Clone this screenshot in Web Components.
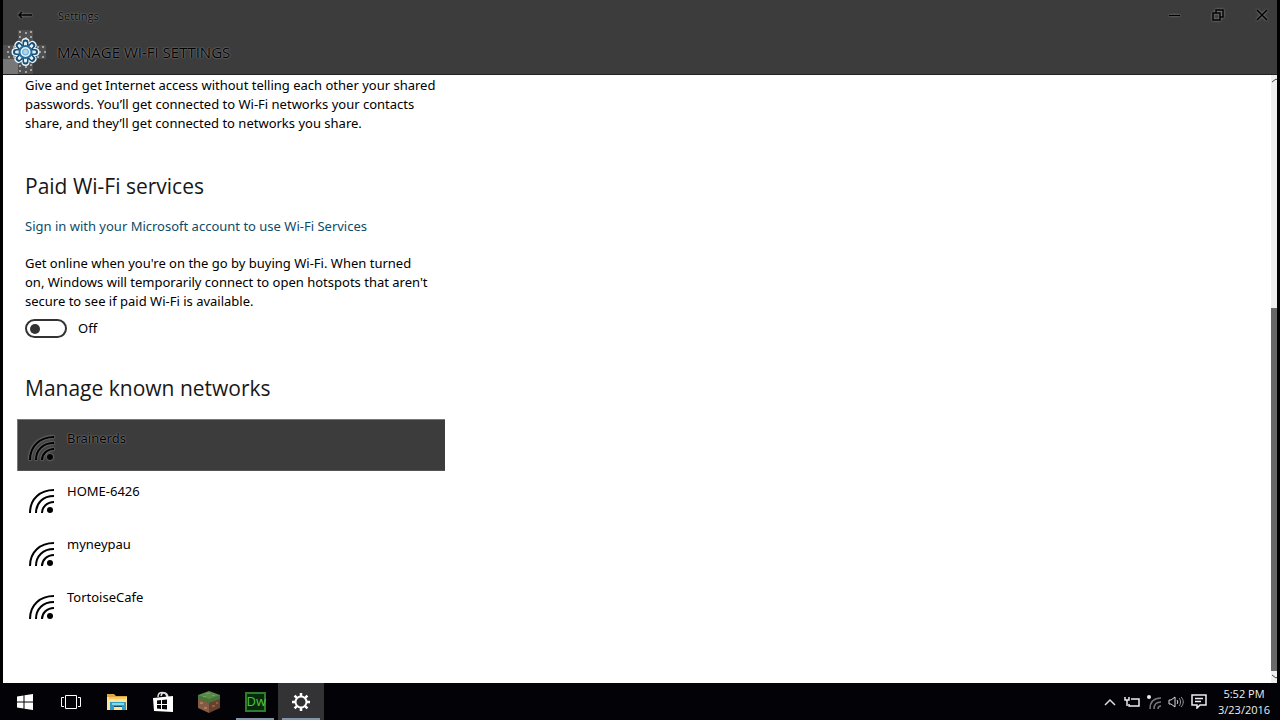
<!DOCTYPE html>
<html lang="en">
<head>
<meta charset="utf-8">
<meta name="viewport" content="width=device-width, initial-scale=1">
<title>Settings</title>
<style>
html, body { height: 100%; margin: 0; background: #000; }
body { font: 13px/19px "Noto Sans", "Open Sans", sans-serif; color: #000; }
</style>
</head>
<body>
<settings-desktop>
  <settings-header slot="header" heading="MANAGE WI-FI SETTINGS">Settings</settings-header>
  <settings-section>
    <p>Give and get Internet access without telling each other your shared<br>passwords. You’ll get connected to Wi-Fi networks your contacts<br>share, and they’ll get connected to networks you share.</p>
  </settings-section>
  <settings-section heading="Paid Wi-Fi services">
    <settings-link href="#sign-in">Sign in with your Microsoft account to use Wi-Fi Services</settings-link>
    <p>Get online when you're on the go by buying Wi-Fi. When turned<br>on, Windows will temporarily connect to open hotspots that aren't<br>secure to see if paid Wi-Fi is available.</p>
    <toggle-switch>Off</toggle-switch>
  </settings-section>
  <settings-section heading="Manage known networks">
    <network-list>
      <network-item selected>Brainerds</network-item>
      <network-item>HOME-6426</network-item>
      <network-item>myneypau</network-item>
      <network-item>TortoiseCafe</network-item>
    </network-list>
  </settings-section>
  <task-bar slot="taskbar"></task-bar>
</settings-desktop>

<script>
const define = (name, html, setup) => {
  const template = document.createElement('template');
  template.innerHTML = html;
  customElements.define(name, class extends HTMLElement {
    constructor() {
      super();
      this.attachShadow({ mode: 'open' }).append(template.content.cloneNode(true));
    }
    connectedCallback() { if (setup) setup(this, this.shadowRoot); }
  });
};

define('settings-desktop', `
<style>
:host { display: grid; grid-template-rows: auto minmax(0, 1fr) auto; height: 100vh; }
.header, .view { margin: 0 3px; }
.view { display: flex; background: #fff; overflow: hidden; }
main { flex: 1; min-width: 0; overflow: hidden; padding: 1px 22px 0; }
</style>
<div class="header"><slot name="header"></slot></div>
<div class="view"><main><slot></slot></main><scroll-strip></scroll-strip></div>
<slot name="taskbar"></slot>`);

define('settings-header', `
<style>
:host { display: block; background: #3c3c3c; color: #000; border-bottom: 1px solid #222; font-family: "Open Sans", sans-serif;
  text-shadow: 0 0 1px #888, 0 0 2px #888; }
.bar { display: flex; align-items: center; height: 30px; padding-left: 12px; }
button { display: grid; place-items: center; width: 30px; height: 30px; padding: 0; border: 0; background: none; color: inherit; }
svg { display: block; filter: drop-shadow(0 0 1px #999); }
.back { width: 20px; }
.title { flex: 1; margin-left: 23px; font-size: 11px; }
.controls { display: flex; gap: 14px; }
.page { display: flex; align-items: center; gap: 7px; height: 44px; }
.page svg { filter: none; }
h1 { margin: 0; font-size: 15px; line-height: 20px; font-weight: 400; }
</style>
<div class="bar">
  <button class="back" aria-label="Back"><svg width="14" height="10" fill="none" stroke="currentColor" stroke-width="1.500"><path d="M14 5H1M4 2 1 5l3 3"/></svg></button>
  <span class="title"><slot></slot></span>
  <div class="controls">
    <button aria-label="Minimize"><svg width="12" height="12" stroke="currentColor"><path d="M1 6.500h11"/></svg></button>
    <button aria-label="Restore"><svg width="12" height="12" fill="none" stroke="currentColor" stroke-width="1.500"><path d="M1 4h7v7H1zM4 4V1h7v7H8"/></svg></button>
    <button aria-label="Close"><svg width="12" height="12" stroke="currentColor" stroke-width="1.500"><path d="m1 1 10 10M11 1 1 11"/></svg></button>
  </div>
</div>
<div class="page">
  <svg width="47" height="44" viewBox="0 0 47 44" fill="none" aria-hidden="true">
    <path fill="#777" d="M0 29h15v15H0z"/>
    <path fill="#505050" d="M15 0h15v44H15zM0 15h43v14H0z"/>
    <path stroke="#a2a2a2" stroke-dasharray="2 3" stroke-width="2" d="M17 1v10M23 2v7M28 1v10M17 35v9M23 36v8M28 34v10M5 17h7M4 22h5M5 27h7M34 17h8M36 22h7M34 27h7"/>
    <g stroke="#e9f5fc" stroke-width="8" stroke-linecap="round"><path d="M22.500 12v20M12.500 22h20M15.500 15l14 14M29.500 15l-14 14"/></g>
    <g stroke="#164e75" stroke-width="6" stroke-linecap="round"><path d="M22.500 12.500v19M13 22h19M15.800 15.300l13.400 13.400M29.200 15.300l-13.400 13.400"/></g>
    <g stroke="#e2f2fb" stroke-width="3" stroke-linecap="round"><path d="M22.500 13v18M13.500 22h18M16.200 15.700l12.600 12.600M28.800 15.700l-12.600 12.600"/></g>
    <circle cx="22.500" cy="22" r="6" fill="#e2f2fb" stroke="#286b96" stroke-width="2"/>
    <circle cx="22.500" cy="22" r="3" fill="#a8d7f2" stroke="#63a5ce"/>
  </svg>
  <h1></h1>
</div>`, (host, root) => { root.querySelector('h1').textContent = host.getAttribute('heading'); });

define('settings-section', `
<style>
:host { display: block; margin-bottom: 36px; }
h2 { margin: 0 0 17px; font: 400 21px/28px "Open Sans", sans-serif; color: #181818; }
h2:empty { display: none; }
::slotted(p) { margin: 0; padding-bottom: 3px; }
</style>
<h2></h2><slot></slot>`, (host, root) => { root.querySelector('h2').textContent = host.getAttribute('heading') || ''; });

define('settings-link', `
<style>
:host { display: block; margin-bottom: 18px; }
a { color: #0f4b66; text-decoration: none; }
</style>
<a><slot></slot></a>`, (host, root) => { root.querySelector('a').href = host.getAttribute('href'); });

define('toggle-switch', `
<style>
:host { display: block; padding-top: 5px; }
label { display: flex; align-items: center; gap: 11px; width: max-content; }
input { appearance: none; display: flex; align-items: center; box-sizing: border-box; width: 42px; height: 19px; margin: 0; padding: 0 3px; border: 2px solid #333; border-radius: 10px; }
input::before { content: ""; width: 10px; height: 10px; border-radius: 50%; background: #333; }
input:checked { justify-content: flex-end; }
</style>
<label><input type="checkbox" role="switch"><span><slot></slot></span></label>`);

define('network-list', `
<style>
:host { display: block; max-width: 428px; margin: 0 -8px; }
</style>
<div role="list"><slot></slot></div>`);

define('network-item', `
<style>
:host { display: block; margin-bottom: 1px; }
button { display: flex; gap: 12px; box-sizing: border-box; width: 100%; height: 52px; padding: 10px 12px; border: 0; background: none; color: #000; font: inherit; text-align: left; }
svg { margin-top: 6px; }
:host([selected]) button { background: #3c3c3c; box-shadow: inset 0 1px #777, inset 1px 0 #777, inset 0 -1px #555; text-shadow: 0 0 1px #888, 0 0 2px #888; }
:host([selected]) svg { filter: drop-shadow(0 0 1px #aaa); }
</style>
<button><svg width="26" height="26" fill="none" stroke="currentColor" stroke-width="2" aria-hidden="true">
<path d="M1 25C1 11 11 2 25 2M7 25C7 15 14 8 25 8M13 25c0-6 5-11 12-11"/><circle cx="21" cy="22" r="3" fill="currentColor" stroke="none"/></svg><span><slot></slot></span></button>`);

define('scroll-strip', `
<style>
:host { display: flex; flex-direction: column; width: 6px; background: #eee; }
svg { display: block; flex: none; }
.before { flex: 221; }
.thumb { flex: 363; background: #686868; }
</style>
<svg width="6" height="12" stroke="#444" fill="none"><path d="m1 7 4-3 4 3"/></svg>
<div class="before"></div><div class="thumb"></div>
<svg width="6" height="12" stroke="#444" fill="none"><path d="m1 4 4 3 4-3"/></svg>`);

define('task-bar', `
<style>
:host { display: flex; justify-content: space-between; height: 37px; padding: 0 10px 0 2px; background: #020207; color: #eee; }
nav, .tray { display: flex; align-items: stretch; }
button { display: grid; place-items: center; width: 46px; padding: 0; border: 0; background: none; color: #fff; }
.running { background: linear-gradient(#8494a8, #8494a8) center bottom / 38px 2px no-repeat; }
.active { background-color: #333336; }
.tray button { width: 22px; }
.tray .notes { width: 24px; }
svg { display: block; }
.dw { box-sizing: border-box; width: 21px; height: 20px; border: 2px solid #2f7d2a; background: #062b0b; color: #52c33e; font: 13px/15px "Open Sans", sans-serif; text-align: center; }
time { display: flex; flex-direction: column; justify-content: center; margin-left: 7px; width: 52px; font: 11px/16px "Open Sans", sans-serif; text-align: center; white-space: nowrap; }
</style>
<nav aria-label="Taskbar">
  <button aria-label="Start"><svg width="16" height="16" fill="#fff"><path d="M0 2.500 6.500 1.500V7.500H0zM7.500 1.300 16 0v7.500H7.500zM0 8.500h6.500v6L0 13.600zM7.500 8.500H16V16l-8.500-1.300z"/></svg></button>
  <button aria-label="Task view"><svg width="20" height="14" fill="none" stroke="#fff"><path d="M4.500.5h11v13h-11zM3 2.500H.5v9H3M17 2.500h2.500v9H17"/></svg></button>
  <button aria-label="File Explorer"><svg width="20" height="18"><path fill="#dda743" d="M0 1h7l2 2h11v14H0z"/><path fill="#ffe397" d="M0 4h20v13H0z"/><path fill="#f3c965" d="M2 4h17v2H2z"/><path fill="#2c9dc6" d="M3 9h16v8h-4v-4H7v4H3z"/><path fill="#8bd5e9" d="M5 10h12v2H5z"/><path fill="#174b63" d="M7 13h8v1H7z"/></svg></button>
  <button aria-label="Store"><svg width="20" height="22" fill="none"><path stroke="#ddd" stroke-width="1.500" d="M5 6c0-6 8-6 9 0M8 5c1-5 6-4 7 1"/><path fill="#fff" d="m0 7 20-2v16L1 20z"/><path fill="#050509" d="M4 9.500 8 9v4H4zM9 9l5-.5V13H9zM4 14h4v4l-4-.4zM9 14h5v4.500L9 18z"/></svg></button>
  <button aria-label="Minecraft"><svg width="22" height="22"><path fill="#5b8a48" d="M11 0 22 4v4l-11 4L0 8V4z"/><path fill="#477539" d="m0 4 11 4v4L0 9zM22 4 11 8v4l11-3z"/><path fill="#855b43" d="m0 8 11 4v10L0 17z"/><path fill="#68402f" d="m22 8-11 4v10l11-5z"/><path fill="#aa7b5e" d="M2 11h3v2H2zM6 16h3v2H6z"/><path fill="#915f48" d="M14 14h3v2h-3zM18 11h2v2h-2z"/><path fill="#76a15c" d="M8 2h4v1H8zM14 4h3v1h-3zM5 5h3v1H5z"/></svg></button>
  <button class="running" aria-label="Dreamweaver"><span class="dw">Dw</span></button>
  <button class="running active" aria-label="Settings"><svg width="18" height="18" fill="none" stroke="#fff"><circle cx="9" cy="9" r="5.500" stroke-width="2"/><path stroke-width="2.500" d="M9 0v3M9 15v3M0 9h3M15 9h3M2.600 2.600l2.200 2.200M13.200 13.200l2.200 2.200M2.600 15.400l2.200-2.200M13.200 4.800l2.200-2.200"/></svg></button>
</nav>
<div class="tray">
  <button aria-label="Show hidden icons"><svg width="12" height="8" fill="none" stroke="#ddd" stroke-width="1.500"><path d="m1 7 5-5 5 5"/></svg></button>
  <button aria-label="Battery"><svg width="16" height="12" fill="none" stroke="#eee" stroke-width="1.500"><path d="M7 3h8v7H5V8M1 1v3h4V1M3 4v6"/></svg></button>
  <button aria-label="Network"><svg width="16" height="16" fill="none" stroke="#777" stroke-width="1.500"><path d="M4 15C4 8 8 4 15 4M8 15c0-5 2-7 7-7M12 15c0-2 1-3 3-3"/><circle cx="3" cy="3" r="2" fill="#eee" stroke="none"/></svg></button>
  <button aria-label="Volume"><svg width="16" height="12" fill="none" stroke="#ddd"><path d="M1 4h2l4-3v10L3 8H1zM9 4c1 1 1 3 0 4"/><path stroke="#999" d="M11 2c2 2 2 6 0 8M13 1c3 3 3 7 0 10"/></svg></button>
  <button class="notes" aria-label="Notifications"><svg width="16" height="15" fill="none" stroke="#eee" stroke-width="1.500"><path d="M1 1h14v10H9l-3 3v-3H1zM4 4.500h8M4 7.500h6"/></svg></button>
  <time datetime="2016-03-23T17:52"><span>5:52 PM</span><span>3/23/2016</span></time>
</div>`);
</script>
</body>
</html>
